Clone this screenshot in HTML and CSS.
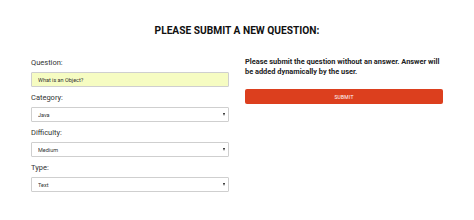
FILE: index.html
```html
<!DOCTYPE html>
<html lang="en">
<head>
  <meta charset="UTF-8">
  <title>Submit a question</title>
  <link rel="stylesheet" href="styles.css">
</head>
<body>
  <h1>PLEASE SUBMIT A NEW QUESTION:</h1>

  <div class="form-row">
    <div class="col">
      <div class="group">
        <label for="question">Question:</label>
        <input type="text" id="question" class="field filled" value="What is an Object?">
      </div>
      <div class="group">
        <label for="category">Category:</label>
        <div class="select-wrap">
          <select id="category" class="field">
            <option>Java</option>
          </select>
        </div>
      </div>
      <div class="group">
        <label for="difficulty">Difficulty:</label>
        <div class="select-wrap">
          <select id="difficulty" class="field">
            <option>Medium</option>
          </select>
        </div>
      </div>
      <div class="group">
        <label for="type">Type:</label>
        <div class="select-wrap">
          <select id="type" class="field">
            <option>Text</option>
          </select>
        </div>
      </div>
    </div>

    <div class="col">
      <p class="note">Please submit the question without an answer. Answer will be added dynamically by the user.</p>
      <button class="submit">SUBMIT</button>
    </div>
  </div>
</body>
</html>
```

FILE: styles.css
```css
body {
  margin: 0;
  background-color: #fff;
  font-family: 'Roboto', 'Liberation Sans', sans-serif;
  color: #222;
}
h1 {
  margin: 24px 0 0;
  font-size: 10.2px;
  line-height: 14px;
  text-align: center;
  color: #111;
}
.form-row {
  display: flex;
  gap: 16px;
  margin: 20px 31px 0;
}
.col {
  flex: 1;
}
.group {
  margin-bottom: 6px;
}
label {
  display: block;
  font-size: 7.5px;
  line-height: 10px;
  margin-bottom: 4px;
  color: #333;
}
.field {
  display: block;
  box-sizing: border-box;
  width: 100%;
  height: 15px;
  padding: 0 6px;
  border: 1px solid #cfcfcf;
  border-radius: 1px;
  background-color: #fff;
  font-family: inherit;
  font-size: 5.5px;
  color: #333;
  outline: none;
}
.filled {
  background-color: #f6fcc2;
}
select.field {
  -webkit-appearance: none;
  appearance: none;
}
.select-wrap {
  position: relative;
}
.select-wrap::after {
  content: "";
  position: absolute;
  right: 4px;
  top: 6px;
  border-left: 1.5px solid transparent;
  border-right: 1.5px solid transparent;
  border-top: 3px solid #222;
}
.note {
  margin: -1px 0 0;
  font-size: 7.4px;
  line-height: 9.5px;
  font-weight: bold;
  color: #222;
}
.submit {
  display: block;
  width: 100%;
  height: 15px;
  margin-top: 13px;
  padding: 0;
  border: none;
  border-radius: 2px;
  background-color: #dc3f1e;
  color: #fff;
  font-family: inherit;
  font-size: 5px;
  letter-spacing: 0.2px;
  cursor: pointer;
}
```
